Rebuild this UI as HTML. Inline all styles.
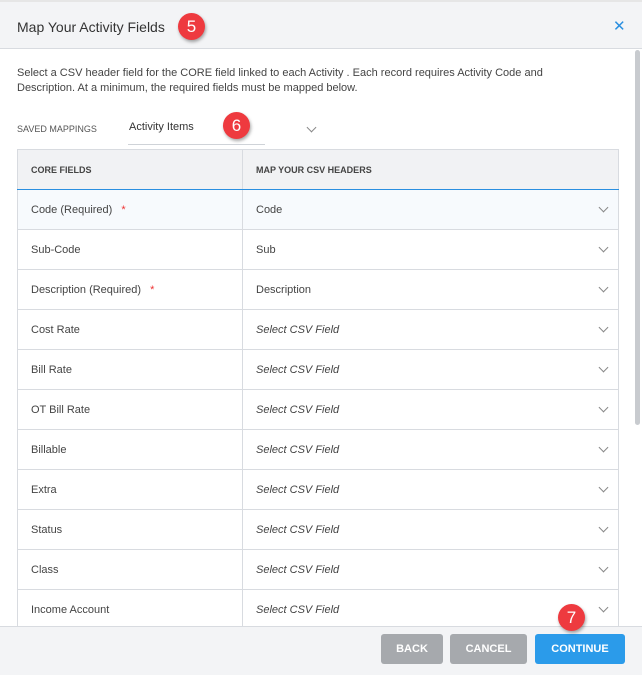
<!DOCTYPE html><html><head><style>
body{margin:0;width:642px;height:674px;overflow:hidden;background:#fff;font-family:"Liberation Sans",sans-serif;color:#333;position:relative}
.hdr{position:absolute;left:0;top:0;width:642px;height:49px;background:#f3f4f6;border-bottom:1px solid #d8dbe0;border-top:2px solid #e6e6e6;box-sizing:border-box}
.hdr .t{position:absolute;left:17px;top:17px;font-size:14px;color:#333}
.x{position:absolute;left:613px;top:15px;font-size:15px;color:#2a8fe0}
.badge{position:absolute;width:27px;height:27px;border-radius:50%;background:#ee3a3f;color:#fff;font-size:17px;text-align:center;line-height:27px;box-shadow:1px 2px 3px rgba(0,0,0,.35)}
.desc{position:absolute;left:17px;top:66px;font-size:11px;line-height:15px;color:#444;width:575px}
.sm{position:absolute;left:17px;top:124px;font-size:9px;color:#555}
.sel{position:absolute;left:129px;top:121px;width:136px;font-size:11px;color:#333}
.selline{position:absolute;left:128px;top:144px;width:137px;height:1px;background:#cfd3d8}
.chev{position:absolute;width:6px;height:6px;border-right:1.3px solid #888;border-bottom:1.3px solid #888;transform:rotate(45deg)}
table{position:absolute;left:17px;top:149px;width:602px;border-collapse:collapse;font-size:11px}
th{height:39px;background:#f1f2f4;text-align:left;font-size:9px;font-weight:bold;color:#444;padding:0 0 0 13px;border:1px solid #d8dbe0;border-bottom:1px solid #2a8fe0}
td{height:39px;border:1px solid #d8dbe0;padding:0 0 0 13px;color:#444;position:relative}
td:first-child{width:211px}
tr.a td{background:#f7fafd}
td i{font-style:italic}
.st{color:#e33;margin-left:6px}
.foot{position:absolute;left:0;top:626px;width:642px;height:48px;background:#f3f4f6;border-top:1px solid #d8dbe0}
.b{position:absolute;top:634px;height:30px;line-height:30px;border-radius:3px;color:#fff;font-size:11px;font-weight:bold;text-align:center}
.sb{position:absolute;left:635px;top:50px;width:5px;height:375px;background:#c8cbcf;border-radius:3px}
</style></head><body>
<div class="hdr"><div class="t">Map Your Activity Fields</div><div class="x">✕</div></div>
<div class="badge" style="left:178px;top:13px">5</div>
<div class="desc">Select a CSV header field for the CORE field linked to each Activity . Each record requires Activity Code and Description. At a minimum, the required fields must be mapped below.</div>
<div class="sm">SAVED MAPPINGS</div>
<div class="sel">Activity Items</div>
<div class="chev" style="left:308px;top:124px"></div>
<div class="selline"></div>
<div class="badge" style="left:223px;top:112px">6</div>
<table>
<tr><th>CORE FIELDS</th><th>MAP YOUR CSV HEADERS</th></tr>
<tr class="a"><td>Code (Required) <span class="st">*</span></td><td>Code</td></tr>
<tr><td>Sub-Code</td><td>Sub</td></tr>
<tr><td>Description (Required) <span class="st">*</span></td><td>Description</td></tr>
<tr><td>Cost Rate</td><td><i>Select CSV Field</i></td></tr>
<tr><td>Bill Rate</td><td><i>Select CSV Field</i></td></tr>
<tr><td>OT Bill Rate</td><td><i>Select CSV Field</i></td></tr>
<tr><td>Billable</td><td><i>Select CSV Field</i></td></tr>
<tr><td>Extra</td><td><i>Select CSV Field</i></td></tr>
<tr><td>Status</td><td><i>Select CSV Field</i></td></tr>
<tr><td>Class</td><td><i>Select CSV Field</i></td></tr>
<tr><td>Income Account</td><td><i>Select CSV Field</i></td></tr>
</table>
<div class="chev" style="left:600px;top:204px"></div>
<div class="chev" style="left:600px;top:244px"></div>
<div class="chev" style="left:600px;top:284px"></div>
<div class="chev" style="left:600px;top:324px"></div>
<div class="chev" style="left:600px;top:364px"></div>
<div class="chev" style="left:600px;top:404px"></div>
<div class="chev" style="left:600px;top:444px"></div>
<div class="chev" style="left:600px;top:484px"></div>
<div class="chev" style="left:600px;top:524px"></div>
<div class="chev" style="left:600px;top:564px"></div>
<div class="chev" style="left:600px;top:604px"></div>
<div class="sb"></div>
<div class="foot"></div>
<div class="b" style="left:381px;width:62px;background:#a6a9ad">BACK</div>
<div class="b" style="left:450px;width:77px;background:#a6a9ad">CANCEL</div>
<div class="b" style="left:535px;width:90px;background:#2b9bea">CONTINUE</div>
<div class="badge" style="left:558px;top:604px">7</div>
</body></html>
